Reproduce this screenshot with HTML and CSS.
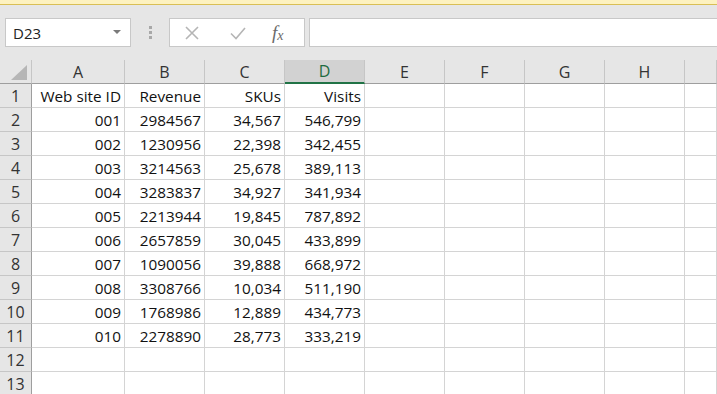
FILE: index.html
```html
<!DOCTYPE html>
<html>
<head>
<meta charset="utf-8">
<link rel="stylesheet" href="styles.css">
</head>
<body>
<div class="topband"></div>
<div class="toolbar">
  <div class="namebox"><span>D23</span><svg class="dd" width="8" height="5" viewBox="0 0 8 5"><path d="M0 0H8L4 4Z" fill="#7a7a7a"/></svg></div>
  <div class="dots"><i></i><i></i><i></i></div>
  <div class="fbtns">
    <svg class="ic" width="16" height="16" viewBox="0 0 16 16"><path d="M2 2L14 14M14 2L2 14" stroke="#b5b5b5" stroke-width="1.6"/></svg>
    <svg class="ic" width="18" height="16" viewBox="0 0 18 16"><path d="M2 8.5L7 13.5L16 3" stroke="#b5b5b5" stroke-width="1.6" fill="none"/></svg>
    <span class="fx">f<sub>x</sub></span>
  </div>
  <div class="finput"></div>
</div>
<div class="sheet">
  <div class="corner"><svg width="16" height="15" viewBox="0 0 16 15"><path d="M16 0V15H0Z" fill="#b6b6b6"/></svg></div>
  <div class="ch">A</div><div class="ch">B</div><div class="ch">C</div><div class="ch sel">D</div><div class="ch">E</div><div class="ch">F</div><div class="ch">G</div><div class="ch">H</div><div class="ch"></div>

  <div class="rh">1</div><div class="c">Web site ID</div><div class="c">Revenue</div><div class="c">SKUs</div><div class="c">Visits</div><div class="c"></div><div class="c"></div><div class="c"></div><div class="c"></div><div class="c"></div>
  <div class="rh">2</div><div class="c">001</div><div class="c">2984567</div><div class="c">34,567</div><div class="c">546,799</div><div class="c"></div><div class="c"></div><div class="c"></div><div class="c"></div><div class="c"></div>
  <div class="rh">3</div><div class="c">002</div><div class="c">1230956</div><div class="c">22,398</div><div class="c">342,455</div><div class="c"></div><div class="c"></div><div class="c"></div><div class="c"></div><div class="c"></div>
  <div class="rh">4</div><div class="c">003</div><div class="c">3214563</div><div class="c">25,678</div><div class="c">389,113</div><div class="c"></div><div class="c"></div><div class="c"></div><div class="c"></div><div class="c"></div>
  <div class="rh">5</div><div class="c">004</div><div class="c">3283837</div><div class="c">34,927</div><div class="c">341,934</div><div class="c"></div><div class="c"></div><div class="c"></div><div class="c"></div><div class="c"></div>
  <div class="rh">6</div><div class="c">005</div><div class="c">2213944</div><div class="c">19,845</div><div class="c">787,892</div><div class="c"></div><div class="c"></div><div class="c"></div><div class="c"></div><div class="c"></div>
  <div class="rh">7</div><div class="c">006</div><div class="c">2657859</div><div class="c">30,045</div><div class="c">433,899</div><div class="c"></div><div class="c"></div><div class="c"></div><div class="c"></div><div class="c"></div>
  <div class="rh">8</div><div class="c">007</div><div class="c">1090056</div><div class="c">39,888</div><div class="c">668,972</div><div class="c"></div><div class="c"></div><div class="c"></div><div class="c"></div><div class="c"></div>
  <div class="rh">9</div><div class="c">008</div><div class="c">3308766</div><div class="c">10,034</div><div class="c">511,190</div><div class="c"></div><div class="c"></div><div class="c"></div><div class="c"></div><div class="c"></div>
  <div class="rh">10</div><div class="c">009</div><div class="c">1768986</div><div class="c">12,889</div><div class="c">434,773</div><div class="c"></div><div class="c"></div><div class="c"></div><div class="c"></div><div class="c"></div>
  <div class="rh">11</div><div class="c">010</div><div class="c">2278890</div><div class="c">28,773</div><div class="c">333,219</div><div class="c"></div><div class="c"></div><div class="c"></div><div class="c"></div><div class="c"></div>
  <div class="rh">12</div><div class="c"></div><div class="c"></div><div class="c"></div><div class="c"></div><div class="c"></div><div class="c"></div><div class="c"></div><div class="c"></div><div class="c"></div>
  <div class="rh">13</div><div class="c"></div><div class="c"></div><div class="c"></div><div class="c"></div><div class="c"></div><div class="c"></div><div class="c"></div><div class="c"></div><div class="c"></div>
</div>
</body>
</html>
```
FILE: styles.css
```css
* { box-sizing: border-box; }
html, body { margin: 0; padding: 0; background: #fff; overflow: hidden; }
body { width: 717px; height: 394px; font-family: "Open Sans", "Noto Sans", sans-serif; color: #000; }

.topband { height: 5px; background: #fdf2c0; border-bottom: 1px solid #d9bf55; }

.toolbar {
  height: 55px;
  background: #e6e6e6;
  display: flex;
  align-items: flex-start;
  padding-top: 13px;
  padding-left: 5px;
}
.namebox {
  width: 126px; height: 29px;
  background: #fff;
  border: 1px solid #c8c8c8;
  display: flex; align-items: center; justify-content: space-between;
  padding: 0 7px 0 7px;
  font-size: 15px; color: #222;
}
.namebox .dd { margin-right: 2px; }
.dots {
  width: 38px; height: 29px;
  display: flex; flex-direction: column; align-items: center; justify-content: center; gap: 2px;
}
.dots i { display: block; width: 3px; height: 3px; background: #a8a8a8; }
.fbtns {
  width: 136px; height: 29px;
  background: #fff;
  border: 1px solid #c8c8c8;
  display: flex; align-items: center;
  padding-left: 14px; gap: 0;
}
.fbtns .ic:first-child { margin-right: 29px; }
.fbtns .ic:nth-child(2) { margin-right: 25px; }
.fx {
  font-family: "Liberation Serif", serif; font-style: italic; font-size: 19px; color: #6a6a6a;
  line-height: 1;
}
.fx sub { font-size: 14px; vertical-align: -1px; }
.finput {
  flex: 1; height: 29px; margin-left: 4px;
  background: #fff; border: 1px solid #c8c8c8; border-right: none;
}

.sheet {
  display: grid;
  grid-template-columns: 32px 93px 80px 80px 80px 80px 80px 80px 80px 1fr;
  grid-auto-rows: 24px;
  font-size: 15.3px;
}
.corner {
  background: #e6e6e6;
  border-right: 1px solid #c6c6c6;
  border-bottom: 1px solid #9e9e9e;
  display: flex; align-items: flex-end; justify-content: flex-end;
  padding: 0 4px 3px 0;
}
.ch {
  background: #e6e6e6;
  border-right: 1px solid #c6c6c6;
  border-bottom: 1px solid #9e9e9e;
  display: flex; align-items: center; justify-content: center;
  color: #333; font-size: 16px;
}
.ch.sel { background: #d2d2d2; border-bottom: 2px solid #217346; color: #1e6b41; }
.rh {
  background: #e6e6e6;
  border-right: 1px solid #9e9e9e;
  border-bottom: 1px solid #c6c6c6;
  display: flex; align-items: center; justify-content: center;
  color: #333; font-size: 16px;
}
.c {
  border-right: 1px solid #d4d4d4;
  border-bottom: 1px solid #d4d4d4;
  display: flex; align-items: center; justify-content: flex-end;
  padding-right: 3px;
  white-space: nowrap;
  color: #111;
}
```
